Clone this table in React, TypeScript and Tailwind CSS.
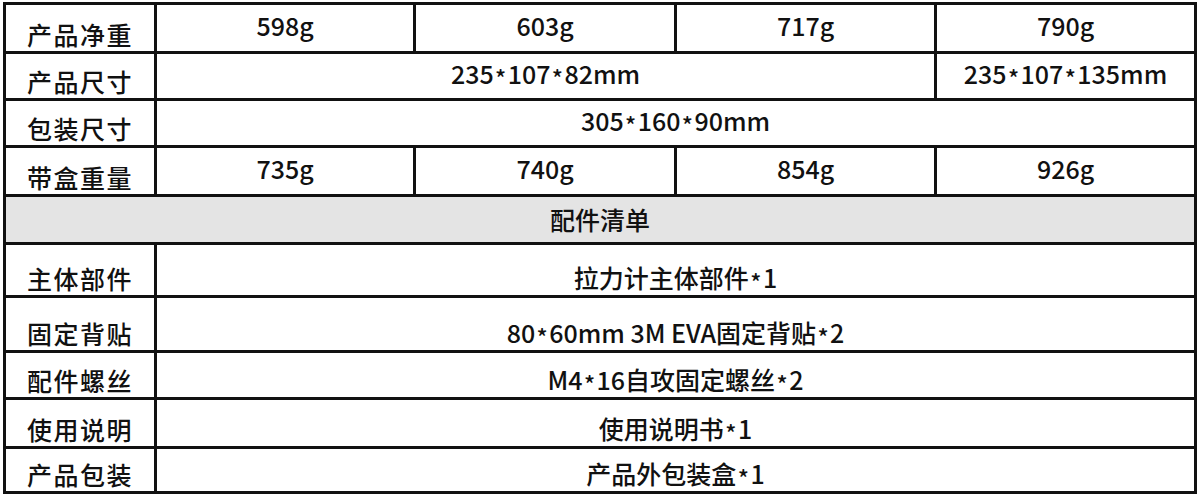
const font = { fontFamily: '"Noto Sans CJK SC", "Noto Sans", sans-serif' };

type Cell = { text: string; span?: number };
type Row = { label?: string; cells: Cell[]; h: string; header?: boolean; bottom?: boolean };

const rows: Row[] = [
  { label: "产品净重", h: "h-[46px]", cells: [{ text: "598g" }, { text: "603g" }, { text: "717g" }, { text: "790g" }] },
  { label: "产品尺寸", h: "h-[44px]", cells: [{ text: "235*107*82mm", span: 3 }, { text: "235*107*135mm" }] },
  { label: "包装尺寸", h: "h-[44px]", cells: [{ text: "305*160*90mm", span: 4 }] },
  { label: "带盒重量", h: "h-[46px]", cells: [{ text: "735g" }, { text: "740g" }, { text: "854g" }, { text: "926g" }] },
  { h: "h-[45px]", header: true, cells: [{ text: "配件清单", span: 5 }] },
  { label: "主体部件", h: "h-[50px]", bottom: true, cells: [{ text: "拉力计主体部件*1", span: 4 }] },
  { label: "固定背贴", h: "h-[52px]", bottom: true, cells: [{ text: "80*60mm 3M EVA固定背贴*2", span: 4 }] },
  { label: "配件螺丝", h: "h-[44px]", bottom: true, cells: [{ text: "M4*16自攻固定螺丝*2", span: 4 }] },
  { label: "使用说明", h: "h-[46px]", bottom: true, cells: [{ text: "使用说明书*1", span: 4 }] },
  { label: "产品包装", h: "h-[42px]", bottom: true, cells: [{ text: "产品外包装盒*1", span: 4 }] },
];

const spanClass: Record<number, string> = {
  1: "col-span-1",
  3: "col-span-3",
  4: "col-span-4",
  5: "col-span-5",
};

// the "*" in the sheet sits lower than the font's own asterisk
function Value({ text }: { text: string }) {
  const parts = text.split("*");
  return (
    <span className="whitespace-pre">
      {parts.map((p, i) => (
        <span key={i}>
          {i > 0 && <span className="relative top-[3px] inline-block w-[14px] text-center text-[23px]">*</span>}
          {p}
        </span>
      ))}
    </span>
  );
}

export default function App() {
  return (
    <div className="w-[1200px] h-[498px] bg-white pl-[3px] pt-[2px]" style={font}>
      <div className="grid w-[1194px] grid-cols-[148px_256px_258px_257px_257px] gap-[3px] bg-[#111] p-[3px] text-[#111]">
        {rows.map((row, i) => (
          <div key={i} className="contents">
            {row.label && (
              <div className={`${row.h} flex items-end bg-white pb-[2px] pl-[21px] text-[25px] font-medium tracking-[1.5px] leading-none`}>
                <span className="pb-[2px]">{row.label}</span>
              </div>
            )}
            {row.cells.map((c, j) => (
              <div
                key={j}
                className={`${row.h} ${spanClass[c.span ?? 1]} flex justify-center ${
                  row.header
                    ? "items-center bg-[#e4e4e4] text-[25px]"
                    : row.bottom
                      ? "items-end pb-[5px] bg-white text-[25px]"
                      : "items-center pb-[5px] bg-white text-[25px]"
                } font-medium leading-none`}
              >
                <Value text={c.text} />
              </div>
            ))}
          </div>
        ))}
      </div>
    </div>
  );
}
